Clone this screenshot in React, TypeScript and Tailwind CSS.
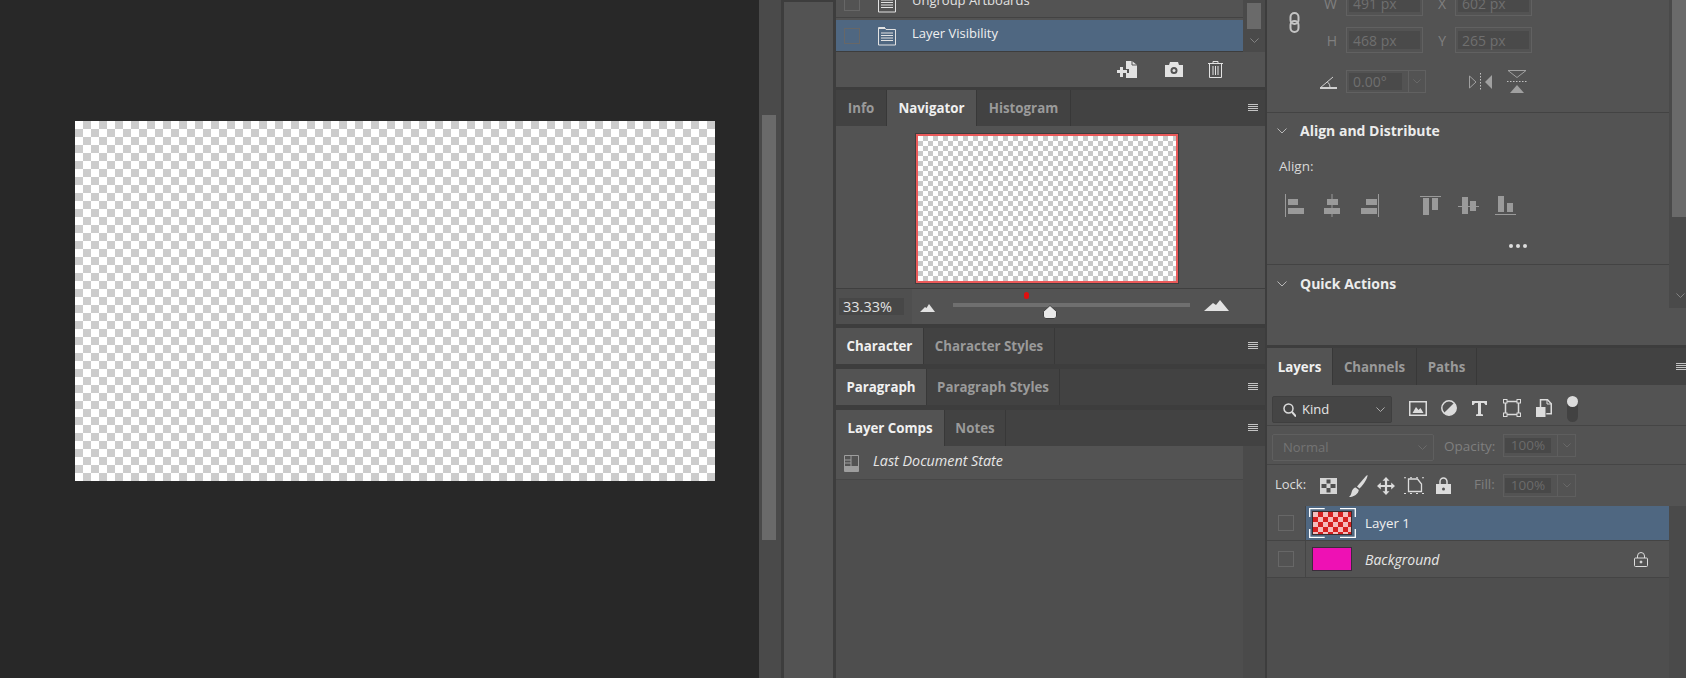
import React from "react";

const F = "font-['Open_Sans','Noto_Sans',sans-serif]";

function Hamburger() {
  return (
    <svg width="10" height="8" viewBox="0 0 10 8" className="shrink-0">
      <path d="M0 .5h10M0 2.500h10M0 4.500h10M0 6.500h10" stroke="#c4c4c4" strokeWidth="1" />
    </svg>
  );
}

function Chevron({ color = "#b8b8b8", size = 10 }: { color?: string; size?: number }) {
  return (
    <svg width={size} height={size * 0.6} viewBox="0 0 10 6" className="shrink-0">
      <path d="M.5.5 5 5 9.500.5" fill="none" stroke={color} strokeWidth="1" />
    </svg>
  );
}

function TabBar({
  tabs,
  active,
  right = "pr-[7px]",
  className = "h-[36px]",
}: {
  tabs: { label: string; w: string }[];
  active: number;
  right?: string;
  className?: string;
}) {
  return (
    <div className={`flex items-stretch justify-between bg-[#424242] ${right} ${className}`}>
      <div className="flex items-stretch">
        {tabs.map((t, i) => (
          <div
            key={t.label}
            className={`flex items-center justify-center border-r border-[#383838] pt-[2px] text-[13.3px] font-bold ${t.w} ${
              i === active ? "bg-[#535353] text-[#f0f0f0]" : "text-[#9a9a9a]"
            }`}
          >
            {t.label}
          </div>
        ))}
      </div>
      <div className="flex items-center">
        <Hamburger />
      </div>
    </div>
  );
}

function DocIcon() {
  return (
    <svg width="18" height="20" viewBox="0 0 18 20" className="ml-[18px] shrink-0">
      <path d="M.5 1.500h6l1.500 2h9.500v15.500h-17z" fill="none" stroke="#e2e2e2" />
      <path d="M3 7h12M3 9.500h12M3 12h12M3 14.500h12" stroke="#e2e2e2" />
      <path d="M1 1h6v2H1z" fill="#e2e2e2" />
    </svg>
  );
}

function EmptyBox({ className = "" }: { className?: string }) {
  return <div className={`h-[16px] w-[16px] shrink-0 border border-[#676767] ${className}`} />;
}

function ActionsPanel() {
  return (
    <div className="flex h-[87px] flex-col bg-[#535353]">
      <div className="flex h-[52px] items-stretch">
        <div className="flex-1 overflow-hidden">
          <div className="flex h-[18px] items-end border-b border-[#434343]">
            <div className="-mb-[1px] flex h-[31px] items-center pl-[8px]">
              <EmptyBox />
              <DocIcon />
              <span className="-mt-[4px] ml-[16px] text-[13px] text-[#e2e2e2]">Ungroup Artboards</span>
            </div>
          </div>
          <div className="mt-[2px] flex h-[32px] items-center border-b border-[#3d3d3d] bg-[#4f6781] pl-[8px]">
            <EmptyBox className="border-[#435668]" />
            <DocIcon />
            <span className="-mt-[4px] ml-[16px] text-[13px] text-[#f0f0f0]">Layer Visibility</span>
          </div>
        </div>
        <div className="flex w-[22px] shrink-0 flex-col items-center bg-[#4a4a4a]">
          <div className="mt-[3px] h-[26px] w-[14px] bg-[#6a6a6a]" />
          <div className="mt-[9px]">
            <Chevron color="#8a8a8a" size={9} />
          </div>
        </div>
      </div>
      <div className="flex flex-1 items-center justify-end pr-[42px]">
        <svg width="20" height="17" viewBox="0 0 20 17">
          <path d="M9 0h6l5 4v13H9V12h3V8H9z" fill="#e2e2e2" />
          <path d="M15 0v4h5" fill="none" stroke="#535353" />
          <path d="M0 10.500h10M4.500 6v10" stroke="#e2e2e2" strokeWidth="3" />
        </svg>
        <svg width="18" height="15" viewBox="0 0 18 15" className="ml-[28px]">
          <path fillRule="evenodd" d="M0 3h4l1-3h8l1 3h4v12H0zM9 5a3.500 3.500 0 1 0 0 7 3.500 3.500 0 0 0 0-7z" fill="#e2e2e2" />
          <circle cx="9" cy="8.500" r="1.500" fill="#e2e2e2" />
        </svg>
        <svg width="15" height="17" viewBox="0 0 15 17" fill="none" stroke="#e2e2e2" className="ml-[25px]">
          <path d="M0 2.500h15M5 2.500V.5h5v2M1.500 2.500v14h12v-14M5 5v9M7.500 5v9M10 5v9" />
        </svg>
      </div>
    </div>
  );
}

function Divider() {
  return <div className="h-[3px] shrink-0 bg-[#3d3d3d]" />;
}

function NavigatorPanel() {
  return (
    <div className="flex flex-col">
      <TabBar
        active={1}
        tabs={[
          { label: "Info", w: "w-[51px]" },
          { label: "Navigator", w: "w-[90px]" },
          { label: "Histogram", w: "w-[94px]" },
        ]}
      />
      <div className="flex h-[163px] items-start border-b border-[#3f3f3f] bg-[#535353] pt-[8px] pl-[80px]">
        <div className="h-[149px] w-[262px] border-2 border-[#ea5a5a] bg-[length:10px_10px] bg-[repeating-conic-gradient(#c8c8c8_0_25%,#ffffff_0_50%)] ring-1 ring-[#3f3f3f]" />
      </div>
      <div className="flex h-[35px] items-center bg-[#535353]">
        <div className="flex h-full w-[76px] shrink-0 items-center bg-[#4f4f4f] pl-[3px]">
          <div className="flex h-[17px] w-[65px] items-center bg-[#474747] pl-[4px] text-[14.5px] text-[#e2e2e2]">33.33%</div>
        </div>
        <svg width="15" height="8" viewBox="0 0 15 8" className="ml-[8px] mt-[2px] shrink-0">
          <path d="M0 8 5 3l1.500 1L9 0l6 8z" fill="#e2e2e2" />
        </svg>
        <div className="relative ml-[18px] mt-[-4px] h-[4px] w-[237px] bg-[#6f6f6f]">
          <div className="absolute left-[71px] top-[-11px] h-[7px] w-[5px] rounded-full bg-[#e01010]" />
          <svg width="14" height="14" viewBox="0 0 14 14" className="absolute left-[90px] top-[2px]">
            <path d="M7 .500 13.500 6.500V11a2.500 2.500 0 0 1-2.500 2.500H3A2.500 2.500 0 0 1 .5 11V6.500z" fill="#e8e8e8" stroke="#3f3f3f" />
          </svg>
        </div>
        <svg width="25" height="11" viewBox="0 0 25 11" className="ml-[14px] mt-[-2px] shrink-0">
          <path d="M0 11 9 3l3 2 4-5 9 11z" fill="#e2e2e2" />
        </svg>
      </div>
      <div className="h-[4px] bg-[#3d3d3d]" />
      <TabBar
        className="h-[37px] border-b-[1px] border-[#3d3d3d]"
        active={0}
        tabs={[
          { label: "Character", w: "w-[88px]" },
          { label: "Character Styles", w: "w-[131px]" },
        ]}
      />
      <div className="h-[4px] bg-[#3d3d3d]" />
      <TabBar
        className="h-[37px] border-b-[1px] border-[#3d3d3d]"
        active={0}
        tabs={[
          { label: "Paragraph", w: "w-[91px]" },
          { label: "Paragraph Styles", w: "w-[133px]" },
        ]}
      />
      <div className="h-[4px] bg-[#3d3d3d]" />
      <TabBar
        active={0}
        tabs={[
          { label: "Layer Comps", w: "w-[109px]" },
          { label: "Notes", w: "w-[61px]" },
        ]}
      />
    </div>
  );
}

function LayerCompsList() {
  return (
    <div className="flex flex-1 items-stretch bg-[#4e4e4e]">
      <div className="flex-1">
        <div className="flex h-[34px] items-center gap-[14px] border-b border-[#474747] bg-[#535353] pl-[8px]">
          <svg width="15" height="17" viewBox="0 0 15 17" className="mt-[2px] shrink-0" fill="none" stroke="#9e9e9e">
            <path d="M.5.5h14v16H.5zM.5 11.500h14M7 .5v11M.5 5h6.500M.5 8h6.500" />
            <path d="M1 12h13v4H1z" fill="#9e9e9e" />
          </svg>
          <span className="-mt-[4px] text-[14.3px] italic text-[#e6e6e6]">Last Document State</span>
        </div>
      </div>
      <div className="w-[22px] shrink-0 bg-[#4a4a4a]" />
    </div>
  );
}

function MiddlePanels() {
  return (
    <div className="flex h-full w-[429px] shrink-0 flex-col">
      <ActionsPanel />
      <Divider />
      <NavigatorPanel />
      <LayerCompsList />
    </div>
  );
}

function Field({ label, value }: { label: string; value: string }) {
  return (
    <div className="flex items-center gap-[9px]">
      <span className="w-[13px] text-right text-[14px] text-[#808080]">{label}</span>
      <div className="flex h-[26px] w-[77px] items-center border border-[#616161] px-[2px] py-[3px]">
        <div className="flex h-full w-full items-center bg-[#4a4a4a] pl-[4px] text-[14px] text-[#6f6f6f]">{value}</div>
      </div>
    </div>
  );
}

function SectionHead({ label }: { label: string }) {
  return (
    <div className="flex items-center gap-[13px] pl-[10px]">
      <Chevron />
      <span className="text-[14px] font-bold text-[#ececec]">{label}</span>
    </div>
  );
}

function AlignIcons() {
  const c = "#9a9a9a";
  return (
    <div className="flex h-[23px] items-start pl-[18px]">
      <svg width="19" height="23" viewBox="0 0 19 23" className="shrink-0">
        <path d="M.5 0v23" stroke={c} />
        <path d="M3 5h10v6H3zM3 14h16v6H3z" fill={c} />
      </svg>
      <svg width="16" height="23" viewBox="0 0 16 23" className="ml-[20px] shrink-0">
        <path d="M8 0v23" stroke={c} />
        <path d="M3 5h11v6H3zM0 14h16v6H0z" fill={c} />
      </svg>
      <svg width="18" height="23" viewBox="0 0 18 23" className="ml-[21px] shrink-0">
        <path d="M17.500 0v23" stroke={c} />
        <path d="M5 5h11v6H5zM0 14h16v6H0z" fill={c} />
      </svg>
      <svg width="21" height="21" viewBox="0 0 21 21" className="ml-[41px] shrink-0">
        <path d="M0 2.500h21" stroke={c} />
        <path d="M3 4h6v17H3zM12 4h6v12h-6z" fill={c} />
      </svg>
      <svg width="21" height="21" viewBox="0 0 21 21" className="ml-[17px] shrink-0">
        <path d="M0 12.500h21" stroke={c} />
        <path d="M4 3h6v17H4zM12 7h6v10h-6z" fill={c} />
      </svg>
      <svg width="21" height="21" viewBox="0 0 21 21" className="ml-[16px] shrink-0">
        <path d="M0 20.500h21" stroke={c} />
        <path d="M3 2h6v16H3zM12 9h6v9h-6z" fill={c} />
      </svg>
    </div>
  );
}

function PropertiesPanel() {
  return (
    <div className="flex h-[347px] items-stretch border-b-[2px] border-[#3d3d3d] bg-[#535353]">
      <div className="flex-1 overflow-hidden">
        <div className="flex h-[113px] border-b border-[#434343]">
          <svg width="13" height="21" viewBox="0 0 13 21" className="ml-[21px] mt-[12px] shrink-0" fill="none" stroke="#c4c4c4" strokeWidth="2">
            <rect x="2.500" y="1" width="8" height="11" rx="4" />
            <rect x="2.500" y="9" width="8" height="11" rx="4" />
          </svg>
          <div className="ml-[23px] mt-[-10px] flex flex-col gap-[11px]">
            <div className="flex gap-[10px]">
              <Field label="W" value="491 px" />
              <Field label="X" value="602 px" />
            </div>
            <div className="flex gap-[10px]">
              <Field label="H" value="468 px" />
              <Field label="Y" value="265 px" />
            </div>
            <div className="-mt-[1px] flex items-center pt-[7px]">
              <svg width="17" height="13" viewBox="0 0 17 13" className="ml-[-4px] mr-[9px] mt-[1px] shrink-0" fill="none" stroke="#d0d0d0">
                <path d="M0 12 13 1M10 12c0-3-1-5-3-6.500" />
                <path d="M0 12h17" strokeWidth="2" />
              </svg>
              <div className="flex h-[23px] w-[80px] items-stretch border border-[#616161]">
                <div className="flex w-[61px] items-center px-[2px] py-[2px]">
                  <div className="flex h-full w-[53px] items-center bg-[#4a4a4a] pl-[4px] text-[14px] text-[#6f6f6f]">0.00°</div>
                </div>
                <div className="flex flex-1 items-center justify-center border-l border-[#616161]">
                  <Chevron color="#6e6e6e" size={8} />
                </div>
              </div>
              <svg width="23" height="18" viewBox="0 0 23 18" className="ml-[43px] shrink-0">
                <path d="M.5 3 7 9 .5 15z" fill="none" stroke="#a0a0a0" />
                <path d="M11.500 0v18" stroke="#c0c0c0" strokeDasharray="1.500 1.500" />
                <path d="M23 2l-7 7 7 7z" fill="#a0a0a0" />
              </svg>
              <svg width="20" height="23" viewBox="0 0 20 23" className="ml-[15px] shrink-0">
                <path d="M1 .5h18l-9 7z" fill="none" stroke="#a0a0a0" />
                <path d="M0 11.500h20" stroke="#c0c0c0" strokeDasharray="1.500 1.500" />
                <path d="M3 23l7-8 7 8z" fill="#a0a0a0" />
              </svg>
            </div>
          </div>
        </div>
        <div className="flex h-[152px] flex-col border-b border-[#434343]">
          <div className="mt-[7px]">
            <SectionHead label="Align and Distribute" />
          </div>
          <div className="mt-[15px] pl-[12px] text-[13.500px] text-[#d8d8d8]">Align:</div>
          <div className="mt-[18px]">
            <AlignIcons />
          </div>
          <div className="mt-[27px] flex gap-[3px] pl-[242px]">
            <span className="h-[4px] w-[4px] rounded-full bg-[#dedede]" />
            <span className="h-[4px] w-[4px] rounded-full bg-[#dedede]" />
            <span className="h-[4px] w-[4px] rounded-full bg-[#dedede]" />
          </div>
        </div>
        <div className="mt-[8px]">
          <SectionHead label="Quick Actions" />
        </div>
      </div>
      <div className="flex w-[17px] shrink-0 flex-col self-stretch">
        <div className="flex h-[308px] flex-col items-end bg-[#4a4a4a]">
          <div className="h-[217px] w-[14px] bg-[#6a6a6a]" />
          <div className="mt-[76px] pr-[1px]">
            <Chevron color="#8a8a8a" size={9} />
          </div>
        </div>
      </div>
    </div>
  );
}

function FilterIcons() {
  const c = "#dcdcdc";
  return (
    <div className="flex items-center">
      <svg width="18" height="15" viewBox="0 0 18 15" className="ml-[17px] mt-[-2px] shrink-0">
        <path d="M.75.75h16.500v13.500H.75z" fill="none" stroke={c} strokeWidth="1.500" />
        <path d="M3.500 12l3.500-6 2.500 3 2-2 3 5z" fill={c} />
      </svg>
      <svg width="16" height="16" viewBox="0 0 16 16" className="ml-[14px] mt-[-2px] shrink-0">
        <circle cx="8" cy="8" r="7.200" fill="none" stroke={c} strokeWidth="1.500" />
        <path d="M13.300 2.700A7.500 7.500 0 0 1 2.700 13.300z" fill={c} />
      </svg>
      <svg width="15" height="15" viewBox="0 0 15 15" className="ml-[15px] mt-[-2px] shrink-0">
        <path d="M0 4V0h15v4h-1.500L12 2H9v11l2 .5V15H4v-1.500l2-.5V2H3L1.500 4z" fill={c} />
      </svg>
      <svg width="18" height="18" viewBox="0 0 18 18" className="ml-[16px] mt-[-2px] shrink-0" fill="none" stroke={c}>
        <path d="M2.500 2.500h13v13h-13z" strokeWidth="1.500" />
        <rect x=".5" y=".5" width="3.500" height="3.500" fill="#535353" />
        <rect x="14" y=".5" width="3.500" height="3.500" fill="#535353" />
        <rect x=".5" y="14" width="3.500" height="3.500" fill="#535353" />
        <rect x="14" y="14" width="3.500" height="3.500" fill="#535353" />
      </svg>
      <svg width="16" height="18" viewBox="0 0 16 18" className="ml-[15px] mt-[-2px] shrink-0">
        <path d="M4.500 8V.75h7l3.750 4v10h-5" fill="none" stroke={c} strokeWidth="1.500" />
        <path d="M11 .5v4.500h4.500" fill="none" stroke={c} />
        <path d="M0 8h9.500v10H0z" fill={c} />
      </svg>
      <div className="relative ml-[15px] mt-[4px] h-[22px] w-[11px] rounded-full bg-[#424242]">
        <div className="absolute left-0 top-[-4px] h-[11px] w-[11px] rounded-full bg-[#dcdcdc]" />
      </div>
    </div>
  );
}

function LockIcons() {
  const c = "#dcdcdc";
  return (
    <div className="flex items-center">
      <svg width="17" height="16" viewBox="0 0 17 16" className="ml-[12px] shrink-0">
        <path d="M0 0h17v16H0z" fill="#d4d4d4" />
        <path d="M6.500 1.500h4v4h-4zM1.500 6h5v4h-5zM10.500 6h5v4h-5zM6.500 10h4v4.500h-4z" fill="#4f4f4f" />
      </svg>
      <svg width="19" height="22" viewBox="0 0 19 22" className="ml-[12px] shrink-0">
        <path d="M18.500 0c.500 2-3 9-8 13.500l-2.500-2C12 7 16.500 1 18.500 0zM6.800 12.500l3 2.400C9.500 18.500 5 22 0 22c2-1.500 2.200-3.500 2.800-5.500s2.200-4 4-4z" fill={c} />
      </svg>
      <svg width="18" height="18" viewBox="0 0 18 18" className="ml-[9px] shrink-0">
        <path d="M9 0l3.500 3.800h-2.400v4.100h4.100V5.500L18 9l-3.800 3.500v-2.400h-4.100v4.100h2.400L9 18l-3.500-3.800h2.400v-4.100H3.800v2.400L0 9l3.800-3.500v2.400h4.100V3.800H5.500z" fill={c} />
      </svg>
      <svg width="22" height="18" viewBox="0 0 22 18" className="ml-[9px] shrink-0" fill="none" stroke={c}>
        <path d="M4.500 2v12.500h13V7l-4-5z" strokeWidth="1.300" />
        <path d="M0 16.500h22M0 .75h22" strokeDasharray="2 4" />
      </svg>
      <svg width="15" height="17" viewBox="0 0 15 17" className="ml-[10px] shrink-0">
        <path d="M4 7V4.500a3.500 3.500 0 0 1 7 0V7" fill="none" stroke={c} strokeWidth="1.500" />
        <path fillRule="evenodd" d="M0 7h15v10H0zM7.500 10.500a1.500 1.500 0 1 0 0 3 1.500 1.500 0 0 0 0-3z" fill={c} />
      </svg>
    </div>
  );
}

function DropdownBox({ w, children, disabled }: { w: string; children: React.ReactNode; disabled?: boolean }) {
  return (
    <div
      className={`flex h-[27px] shrink-0 items-center justify-between rounded-[2px] border pr-[3px] pl-[10px] ${w} ${
        disabled ? "border-[#5f5f5f] bg-[#535353]" : "border-[#3f3f3f] bg-[#454545]"
      }`}
    >
      {children}
    </div>
  );
}

function Stepper({ value }: { value: string }) {
  return (
    <div className="flex h-[23px] w-[73px] items-stretch border border-[#5e5e5e]">
      <div className="flex w-[53px] items-center py-[3px] pl-[1px]">
        <div className="flex h-full w-[46px] items-center justify-center bg-[#484848] text-[13.500px] text-[#6b6b6b]">{value}</div>
      </div>
      <div className="flex flex-1 items-center justify-center border-l border-[#5e5e5e]">
        <Chevron color="#6e6e6e" size={8} />
      </div>
    </div>
  );
}

function LayerRow({
  selected,
  name,
  italic,
  locked,
  thumb,
  h,
}: {
  selected?: boolean;
  name: string;
  italic?: boolean;
  locked?: boolean;
  thumb: React.ReactNode;
  h: string;
}) {
  return (
    <div className={`flex items-stretch border-b border-[#444444] ${h}`}>
      <div className="flex w-[39px] shrink-0 items-center justify-center border-r border-[#454545]">
        <EmptyBox />
      </div>
      <div className={`flex flex-1 items-center ${selected ? "bg-[#4f6781]" : ""}`}>
        <div className="relative ml-[6px] flex h-[24px] w-[40px] shrink-0 items-center justify-center">{thumb}</div>
        <span className={`ml-[13px] flex-1 ${italic ? "text-[14px] italic text-[#e6e6e6]" : "pt-[2px] text-[13.300px] text-[#f0f0f0]"}`}>{name}</span>
        {locked && (
          <svg width="14" height="15" viewBox="0 0 14 15" className="mr-[21px] shrink-0" fill="none" stroke="#dcdcdc">
            <path d="M3.500 6V4a3.500 3.500 0 0 1 7 0v2" />
            <rect x=".5" y="6" width="13" height="8.500" rx="1" />
            <circle cx="7" cy="10" r="1" fill="#dcdcdc" />
          </svg>
        )}
      </div>
    </div>
  );
}

function LayersPanel() {
  return (
    <div className="flex flex-1 flex-col">
      <TabBar
        right="pr-[0px]"
        className="h-[37px]"
        active={0}
        tabs={[
          { label: "Layers", w: "w-[66px]" },
          { label: "Channels", w: "w-[84px]" },
          { label: "Paths", w: "w-[60px]" },
        ]}
      />
      <div className="flex h-[41px] items-start border-b border-[#454545] bg-[#535353] pl-[5px] pt-[11px]">
        <DropdownBox w="w-[120px]">
          <div className="flex items-center gap-[6px] pl-0">
            <svg width="13" height="14" viewBox="0 0 13 14" fill="none" stroke="#dcdcdc" className="shrink-0">
              <circle cx="5.500" cy="5.500" r="4.500" strokeWidth="1.500" />
              <path d="m9 9 4 4.500" strokeWidth="2" />
            </svg>
            <span className="text-[13px] text-[#e6e6e6]">Kind</span>
          </div>
          <div className="pr-[3px]">
            <Chevron size={9} />
          </div>
        </DropdownBox>
        <FilterIcons />
      </div>
      <div className="flex h-[39px] items-start border-b border-[#454545] bg-[#535353] pl-[5px] pt-[8px]">
        <DropdownBox w="w-[162px]" disabled>
          <span className="text-[13px] text-[#737373]">Normal</span>
          <div className="pr-[3px]">
            <Chevron color="#6e6e6e" size={9} />
          </div>
        </DropdownBox>
        <span className="ml-[10px] w-[59px] text-[13.500px] leading-[24px] text-[#7f7f7f]">Opacity:</span>
        <Stepper value="100%" />
      </div>
      <div className="flex h-[41px] items-center bg-[#535353] pl-[8px]">
        <span className="w-[33px] pb-[2px] text-[13px] text-[#dcdcdc]">Lock:</span>
        <LockIcons />
        <span className="ml-[23px] w-[29px] pb-[2px] text-[13.500px] text-[#7f7f7f]">Fill:</span>
        <Stepper value="100%" />
      </div>
      <div className="flex flex-1 items-stretch bg-[#4e4e4e]">
        <div className="flex-1">
          <div className="bg-[#535353]">
            <LayerRow
              h="h-[35px]"
              selected
              name="Layer 1"
              thumb={
                <>
                  <div className="h-[24px] w-[40px] border border-[#3c2b2b] bg-[length:10px_10px] bg-[repeating-conic-gradient(#d62020_0_25%,#f5bcbc_0_50%)]" />
                  <svg width="47" height="30" viewBox="0 0 47 30" className="absolute left-[-3.500px] top-[-3px]" fill="none" stroke="#ffffff" strokeWidth="1.300">
                    <path d="M.7 9V.7h15M31 .7h15.300V9M.7 21v8.300h15M31 29.300h15.300V21" />
                  </svg>
                </>
              }
            />
            <LayerRow
              h="h-[37px]"
              name="Background"
              italic
              locked
              thumb={<div className="h-[24px] w-[40px] border border-[#3c2b3c] bg-[#ee11b4]" />}
            />
          </div>
        </div>
        <div className="w-[17px] shrink-0 bg-[#4a4a4a]" />
      </div>
    </div>
  );
}

export default function App() {
  return (
    <div className={`flex h-[678px] w-[1686px] overflow-hidden bg-[#3d3d3d] ${F}`}>
      <div className="flex h-full w-[759px] shrink-0 items-start bg-[#282828] pt-[121px] pl-[75px]">
        <div className="h-[360px] w-[640px] bg-[length:16px_16px] bg-[repeating-conic-gradient(#cccccc_0_25%,#ffffff_0_50%)]" />
      </div>
      <div className="h-full w-[22px] shrink-0 bg-[#4a4a4a] pt-[115px] pl-[3px]">
        <div className="h-[425px] w-[14px] bg-[#6a6a6a]" />
      </div>
      <div className="ml-[3px] mt-[2px] h-[676px] w-[49px] shrink-0 bg-[#535353]" />
      <div className="ml-[3px] h-full shrink-0">
        <MiddlePanels />
      </div>
      <div className="ml-[2px] flex h-full w-[419px] shrink-0 flex-col">
        <PropertiesPanel />
        <div className="h-[1px] bg-[#3d3d3d]" />
        <LayersPanel />
      </div>
    </div>
  );
}
